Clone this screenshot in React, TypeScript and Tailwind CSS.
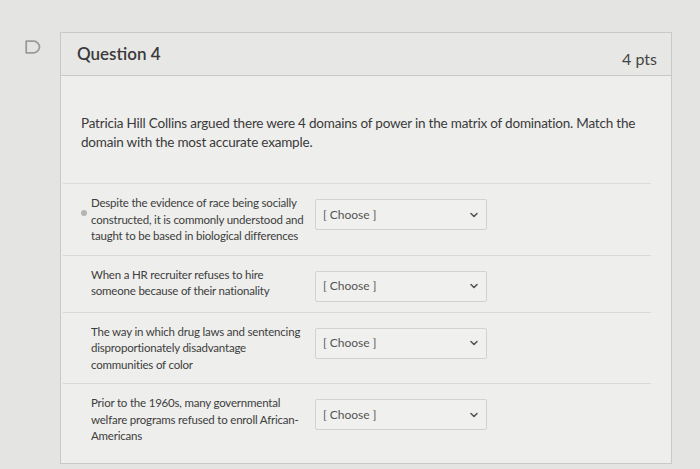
const rows = [
  {
    lines: ["Despite the evidence of race being socially", "constructed, it is commonly understood and", "taught to be based in biological differences"],
    dot: true,
  },
  { lines: ["When a HR recruiter refuses to hire", "someone because of their nationality"] },
  { lines: ["The way in which drug laws and sentencing", "disproportionately disadvantage", "communities of color"] },
  { lines: ["Prior to the 1960s, many governmental", "welfare programs refused to enroll African-", "Americans"] },
];

const Chevron = () => (
  <svg width="10" height="10" viewBox="0 0 10 10" fill="none">
    <path d="M2 3.5 L5 6.5 L8 3.5" stroke="#555" strokeWidth="1.6" strokeLinecap="round" strokeLinejoin="round" />
  </svg>
);

const App = () => {
  return (
    <div className="w-[700px] h-[469px] overflow-hidden bg-[#e4e5e3] font-['Lato',sans-serif] text-[#3d3d3d] pt-[32px]">
      <div className="flex">
        <div className="w-[60px] flex justify-end pr-[19px] pt-[8px]">
          <svg width="16" height="14" viewBox="0 0 16 14" fill="none">
            <path d="M1.2 1.2 H9 C11.8 1.2 14.5 4.2 14.5 7 C14.5 9.8 11.8 12.8 9 12.8 H1.2 Z" stroke="#9a9b99" strokeWidth="1.8" strokeLinejoin="round" />
          </svg>
        </div>
        <div className="w-[612px] h-[432px] border border-[#c9cac8] bg-[#eeeeec] flex flex-col">
          <div className="h-[43px] bg-[#e7e8e6] border-b border-[#c9cac8] flex items-center justify-between pl-[16px] pr-[14px]">
            <span className="text-[17px] font-semibold text-[#3a3a3a]">Question 4</span>
            <span className="text-[16px] text-[#444] mt-[10px]">4 pts</span>
          </div>
          <div className="pl-[20px] pr-[20px] pt-[38px]">
            <p className="w-[570px] text-[13.5px] leading-[19px] tracking-[-0.2px] text-[#3a3a3a]">
              Patricia Hill Collins argued there were 4 domains of power in the matrix of domination. Match the domain with the most accurate example.
            </p>
          </div>
          <div className="mt-[31px] ml-[2px] mr-[20px] border-t border-[#dcdcda]">
            {rows.map((row, i) => (
              <div
                key={i}
                className={`flex items-start pt-[11px] pb-[10px] pl-[18px] ${i < rows.length - 1 ? "border-b border-[#d9d9d7]" : ""}`}
              >
                <div className="w-[8px] pt-[15px]">
                  {row.dot && <div className="w-[6px] h-[6px] rounded-full bg-[#b5b5b3]" />}
                </div>
                <p className="w-[226px] pl-[2px] text-[11.5px] leading-[16.5px] tracking-[-0.2px] text-[#3d3d3d] whitespace-nowrap">
                  {row.lines.map((l, j) => (
                    <span key={j} className="block">{l}</span>
                  ))}
                </p>
                <div className="mt-[4px] w-[172px] h-[31px] border border-[#d2d3d1] bg-[#f0f0ee] rounded-[2px] flex items-center justify-between pl-[7px] pr-[7px]">
                  <span className="text-[12px] text-[#555]">[ Choose ]</span>
                  <Chevron />
                </div>
              </div>
            ))}
          </div>
        </div>
      </div>
    </div>
  );
};

export default App;
